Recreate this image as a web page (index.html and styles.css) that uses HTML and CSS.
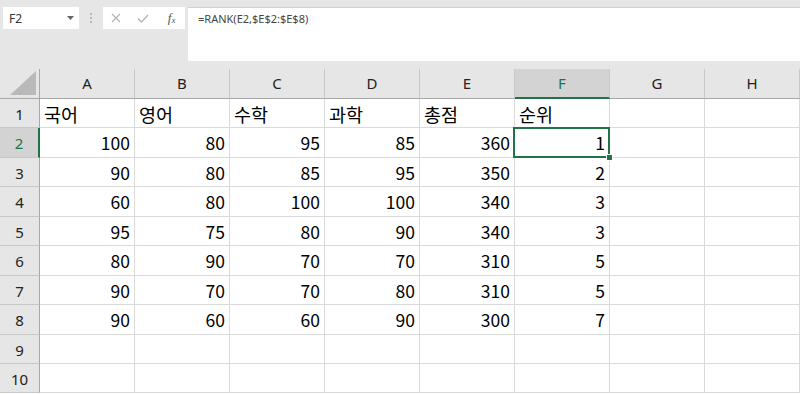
FILE: index.html
```html
<!DOCTYPE html>
<html lang="ko">
<head>
    <meta charset="UTF-8">
    <title>RANK</title>
    <link rel="stylesheet" href="styles.css">
</head>
<body>

    <!-- Name box + formula bar -->
    <div class="toolbar">
        <div class="name-box">
            <span>F2</span>
            <svg class="drop" width="7" height="4" viewBox="0 0 7 4"><path d="M0 0h7L3.5 4z" fill="#666"/></svg>
        </div>
        <div class="grip"><i></i><i></i><i></i></div>
        <div class="fx-buttons">
            <span class="fx-btn">
                <svg width="10" height="10" viewBox="0 0 10 10"><path d="M1 1L9 9M9 1L1 9" stroke="#b4b4b4" stroke-width="1.2" fill="none"/></svg>
            </span>
            <span class="fx-btn">
                <svg width="12" height="9" viewBox="0 0 12 9"><path d="M1 4.5L4.5 8L11 1" stroke="#b4b4b4" stroke-width="1.3" fill="none"/></svg>
            </span>
            <span class="fx-btn fx-label">f<small>x</small></span>
        </div>
        <div class="formula-bar">=RANK(E2,$E$2:$E$8)</div>
    </div>

    <!-- Sheet -->
    <div class="sheet">
        <div class="row head-row">
            <div class="corner"><svg width="26" height="24" viewBox="0 0 26 24"><path d="M26 0V24H0z" fill="#b9b9b9"/></svg></div>
            <div class="col-head">A</div>
            <div class="col-head">B</div>
            <div class="col-head">C</div>
            <div class="col-head">D</div>
            <div class="col-head">E</div>
            <div class="col-head active">F</div>
            <div class="col-head">G</div>
            <div class="col-head">H</div>
        </div>
        <div class="row">
            <div class="row-head">1</div>
            <div class="cell text">국어</div>
            <div class="cell text">영어</div>
            <div class="cell text">수학</div>
            <div class="cell text">과학</div>
            <div class="cell text">총점</div>
            <div class="cell text">순위</div>
            <div class="cell"></div>
            <div class="cell"></div>
        </div>
        <div class="row">
            <div class="row-head active">2</div>
            <div class="cell">100</div>
            <div class="cell">80</div>
            <div class="cell">95</div>
            <div class="cell">85</div>
            <div class="cell">360</div>
            <div class="cell selected">1<span class="handle"></span></div>
            <div class="cell"></div>
            <div class="cell"></div>
        </div>
        <div class="row">
            <div class="row-head">3</div>
            <div class="cell">90</div>
            <div class="cell">80</div>
            <div class="cell">85</div>
            <div class="cell">95</div>
            <div class="cell">350</div>
            <div class="cell">2</div>
            <div class="cell"></div>
            <div class="cell"></div>
        </div>
        <div class="row">
            <div class="row-head">4</div>
            <div class="cell">60</div>
            <div class="cell">80</div>
            <div class="cell">100</div>
            <div class="cell">100</div>
            <div class="cell">340</div>
            <div class="cell">3</div>
            <div class="cell"></div>
            <div class="cell"></div>
        </div>
        <div class="row">
            <div class="row-head">5</div>
            <div class="cell">95</div>
            <div class="cell">75</div>
            <div class="cell">80</div>
            <div class="cell">90</div>
            <div class="cell">340</div>
            <div class="cell">3</div>
            <div class="cell"></div>
            <div class="cell"></div>
        </div>
        <div class="row">
            <div class="row-head">6</div>
            <div class="cell">80</div>
            <div class="cell">90</div>
            <div class="cell">70</div>
            <div class="cell">70</div>
            <div class="cell">310</div>
            <div class="cell">5</div>
            <div class="cell"></div>
            <div class="cell"></div>
        </div>
        <div class="row">
            <div class="row-head">7</div>
            <div class="cell">90</div>
            <div class="cell">70</div>
            <div class="cell">70</div>
            <div class="cell">80</div>
            <div class="cell">310</div>
            <div class="cell">5</div>
            <div class="cell"></div>
            <div class="cell"></div>
        </div>
        <div class="row">
            <div class="row-head">8</div>
            <div class="cell">90</div>
            <div class="cell">60</div>
            <div class="cell">60</div>
            <div class="cell">90</div>
            <div class="cell">300</div>
            <div class="cell">7</div>
            <div class="cell"></div>
            <div class="cell"></div>
        </div>
        <div class="row">
            <div class="row-head">9</div>
            <div class="cell"></div>
            <div class="cell"></div>
            <div class="cell"></div>
            <div class="cell"></div>
            <div class="cell"></div>
            <div class="cell"></div>
            <div class="cell"></div>
            <div class="cell"></div>
        </div>
        <div class="row">
            <div class="row-head">10</div>
            <div class="cell"></div>
            <div class="cell"></div>
            <div class="cell"></div>
            <div class="cell"></div>
            <div class="cell"></div>
            <div class="cell"></div>
            <div class="cell"></div>
            <div class="cell"></div>
        </div>
    </div>

</body>
</html>
```

FILE: styles.css
```css
/* Page */
body {
    margin: 0;
    width: 800px;
    height: 394px;
    overflow: hidden;
    background: #fff;
    font-family: "Noto Sans", "Noto Sans CJK KR", sans-serif;
}

/* Top bar: name box, buttons, formula */
.toolbar {
    display: flex;
    align-items: flex-start;
    height: 69px;
    padding-top: 7px;
    box-sizing: border-box;
    background: #e6e6e6;
}

.name-box {
    display: flex;
    align-items: center;
    justify-content: space-between;
    margin-left: 3px;
    width: 76px;
    height: 22px;
    padding: 0 5px 0 6px;
    box-sizing: border-box;
    background: #fff;
    font-size: 12px;
    color: #333;
}

.grip {
    width: 24px;
    height: 22px;
    display: flex;
    flex-direction: column;
    align-items: center;
    justify-content: center;
    gap: 2px;
}

.grip i {
    width: 2px;
    height: 2px;
    background: #b8b8b8;
}

.fx-buttons {
    display: flex;
    width: 82px;
    height: 22px;
    background: #fff;
}

.fx-btn {
    width: 27px;
    display: flex;
    align-items: center;
    justify-content: center;
}

.fx-label {
    font-family: "Liberation Serif", serif;
    font-style: italic;
    font-size: 13px;
    color: #555;
    padding-left: 2px;
}

.fx-label small {
    font-size: 9px;
    margin-top: 3px;
}

.formula-bar {
    flex: 1;
    margin-left: 3px;
    height: 54px;
    padding: 3px 0 0 10px;
    box-sizing: border-box;
    background: #fff;
    border-top: 1px solid #d0d0d0;
    font-size: 11px;
    color: #444;
}

/* Grid */
.row {
    display: flex;
    height: 29.45px;
}

.head-row {
    height: 30px;
}

.corner,
.row-head {
    width: 40px;
    flex: none;
    box-sizing: border-box;
    background: #e6e6e6;
    border-right: 1px solid #a8a8a8;
}

.corner {
    display: flex;
    align-items: flex-end;
    justify-content: flex-end;
    padding: 0 3px 3px 0;
    border-bottom: 1px solid #a8a8a8;
}

.col-head {
    width: 95px;
    flex: none;
    box-sizing: border-box;
    background: #e6e6e6;
    border-right: 1px solid #c8c8c8;
    border-bottom: 1px solid #a8a8a8;
    text-align: center;
    line-height: 29px;
    font-size: 15px;
    color: #222;
}

.col-head.active {
    background: #d3d3d3;
    border-bottom: 2px solid #217346;
    color: #217346;
}

.row-head {
    border-bottom: 1px solid #c8c8c8;
    text-align: center;
    line-height: 30px;
    font-size: 15px;
    color: #222;
}

.row-head.active {
    background: #d3d3d3;
    border-right: 2px solid #217346;
    color: #217346;
}

.cell {
    position: relative;
    width: 95px;
    flex: none;
    box-sizing: border-box;
    border-right: 1px solid #dadada;
    border-bottom: 1px solid #dadada;
    padding: 0 4px;
    text-align: right;
    line-height: 30px;
    font-family: "Noto Sans CJK KR", sans-serif;
    font-size: 17.5px;
    color: #000;
}

.cell.text {
    text-align: left;
    padding-left: 4px;
    font-size: 18.5px;
}

/* Active cell outline */
.selected::after {
    content: "";
    position: absolute;
    left: -2px;
    top: -1px;
    right: -1px;
    bottom: -1px;
    border: 2px solid #217346;
}

.handle {
    position: absolute;
    right: -4px;
    bottom: -4px;
    width: 5px;
    height: 5px;
    background: #217346;
    border: 1px solid #fff;
    z-index: 1;
}
```
